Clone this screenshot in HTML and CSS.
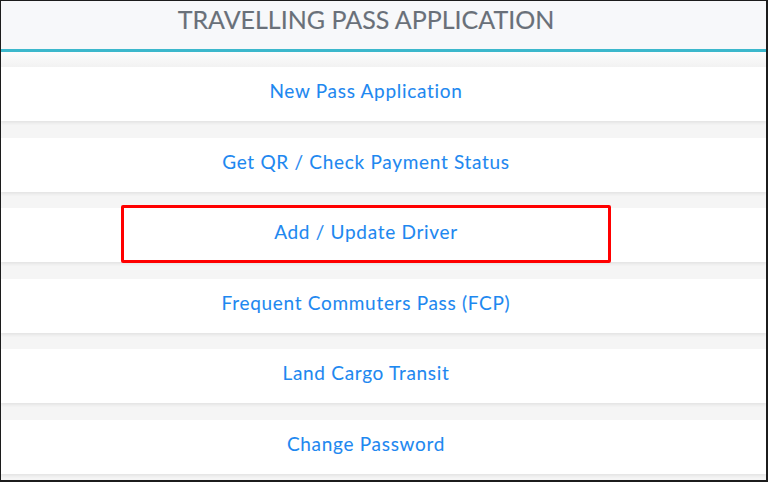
FILE: index.html
```html
<!DOCTYPE html>
<html>
<head>
<meta charset="utf-8">
<link rel="stylesheet" href="styles.css">
</head>
<body>
<div class="frame">
  <header class="header">
    <h1 class="title">TRAVELLING PASS APPLICATION</h1>
  </header>
  <main class="menu">
    <a class="item">New Pass Application</a>
    <a class="item">Get QR / Check Payment Status</a>
    <a class="item item-marked">Add / Update Driver<span class="highlight"></span></a>
    <a class="item">Frequent Commuters Pass (FCP)</a>
    <a class="item">Land Cargo Transit</a>
    <a class="item">Change Password</a>
  </main>
</div>
</body>
</html>
```
FILE: styles.css
```css
* { box-sizing: border-box; }
html, body { margin: 0; padding: 0; }
body {
  width: 768px;
  height: 482px;
  overflow: hidden;
  font-family: Lato, "Open Sans", sans-serif;
  background: #fff;
}
.frame {
  width: 768px;
  height: 482px;
  border-top: 1px solid #1c1c1c;
  border-left: 1px solid #1c1c1c;
  border-right: 2px solid #1c1c1c;
  border-bottom: 2px solid #1c1c1c;
  display: flex;
  flex-direction: column;
  overflow: hidden;
}
.header {
  height: 51px;
  flex: none;
  background: #f7f8fa;
  border-bottom: 2px solid #3cb8cc;
  box-shadow: inset 0 -1px 0 #3cb8cc;
  padding-right: 35px;
}
.title {
  margin: 0;
  padding-top: 3px;
  text-align: center;
  font-weight: 400;
  font-size: 25px;
  line-height: 30px;
  color: #697079;
  letter-spacing: 0;
  -webkit-text-stroke: 0.15px #697079;
}
.menu {
  flex: 1;
  display: flex;
  flex-direction: column;
  gap: 16.6px;
  padding-top: 15px;
  background-color: #f5f5f5;
  background-image: linear-gradient(#fdfdfd, #f2f2f2 15px, #f5f5f5 16px);
}
.item {
  position: relative;
  height: 54px;
  flex: none;
  display: flex;
  align-items: center;
  justify-content: center;
  padding-right: 35px;
  padding-bottom: 7px;
  background: #fff;
  color: #1e88f0;
  font-size: 19px;
  letter-spacing: 0.7px;
  -webkit-text-stroke: 0.08px #1e88f0;
  text-decoration: none;
  box-shadow: 0 2px 3px rgba(0,0,0,0.07);
}
.highlight {
  position: absolute;
  left: 120px;
  top: -3px;
  width: 490px;
  height: 58px;
  border: 3px solid #ff0000;
  border-radius: 2px;
}
```
